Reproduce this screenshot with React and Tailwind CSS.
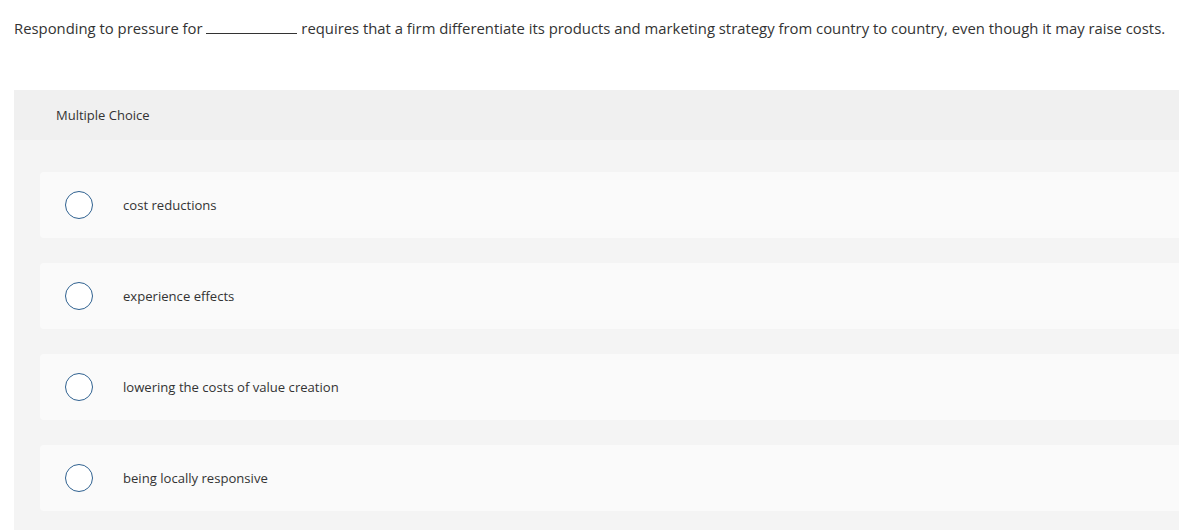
const options = [
  "cost reductions",
  "experience effects",
  "lowering the costs of value creation",
  "being locally responsive",
];

export default function App() {
  return (
    <div
      className="min-h-[530px] bg-white text-[#333333]"
      style={{ fontFamily: '"Open Sans", "Lato", sans-serif' }}
    >
      {/* Question */}
      <p className="pl-[14px] pt-[17px] text-[14.85px] leading-[22px]">
        Responding to pressure for{" "}
        <span className="inline-block w-[91px] border-b border-[#333333] align-baseline"></span>{" "}
        requires that a firm differentiate its products and marketing strategy from country to country, even though it may raise costs.
      </p>

      {/* Answer panel */}
      <div className="ml-[14px] mt-[51px] bg-[#f4f4f4]">
        <div className="flex h-[50px] items-center bg-[#f0f0f0] pl-[42px] pt-[1px] text-[13px]">
          Multiple Choice
        </div>
        <div className="flex flex-col gap-[25px] pl-[26px] pt-[32px] pb-[19px]">
          {options.map((opt) => (
            <label
              key={opt}
              className="flex h-[66px] items-center rounded-l bg-[#fafafa] pl-[25px]"
            >
              <span className="h-[28px] w-[28px] shrink-0 rounded-full border-[1.5px] border-[#2f6190] bg-white"></span>
              <span className="ml-[30px] pt-[1px] text-[13.1px]">{opt}</span>
            </label>
          ))}
        </div>
      </div>
    </div>
  );
}
